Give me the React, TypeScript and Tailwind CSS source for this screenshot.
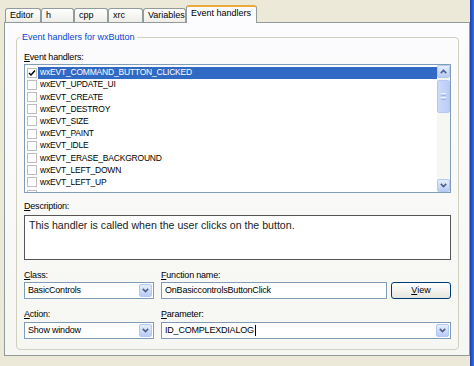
import React from "react";

const rows = [
  "wxEVT_COMMAND_BUTTON_CLICKED",
  "wxEVT_UPDATE_UI",
  "wxEVT_CREATE",
  "wxEVT_DESTROY",
  "wxEVT_SIZE",
  "wxEVT_PAINT",
  "wxEVT_IDLE",
  "wxEVT_ERASE_BACKGROUND",
  "wxEVT_LEFT_DOWN",
  "wxEVT_LEFT_UP",
  "",
];

const tabs = [
  { label: "Editor", cls: "w-[36px]" },
  { label: "h", cls: "w-[33px]" },
  { label: "cpp", cls: "w-[34px]" },
  { label: "xrc", cls: "w-[35px]" },
  { label: "Variables", cls: "w-[43px]" },
];

function ChevronDown() {
  return (
    <svg width="7" height="5" viewBox="0 0 7 5">
      <path d="M0.8 0.9 L3.5 3.6 L6.2 0.9" fill="none" stroke="#4D6185" strokeWidth="1.6" />
    </svg>
  );
}

function ChevronUp() {
  return (
    <svg width="7" height="5" viewBox="0 0 7 5">
      <path d="M0.8 4.1 L3.5 1.4 L6.2 4.1" fill="none" stroke="#4D6185" strokeWidth="1.6" />
    </svg>
  );
}

function XpButton({ children }: { children: React.ReactNode }) {
  return (
    <div className="w-[13px] h-[13px] rounded-[2px] border border-[#B4C8F4] bg-gradient-to-b from-[#E6EEFD] to-[#B8CBF6] flex items-center justify-center shrink-0">
      {children}
    </div>
  );
}

function Combo({ text, caret }: { text: string; caret?: boolean }) {
  return (
    <div className="h-[17px] border border-[#7F9DB9] bg-white flex items-center pr-[1px]">
      <div className="flex-1 flex items-center pl-[3px] text-[9px] tracking-[-0.2px] leading-[11px]">
        <span>{text}</span>
        {caret && <span className="w-[1px] h-[11px] bg-black ml-[1px]" />}
      </div>
      <XpButton>
        <ChevronDown />
      </XpButton>
    </div>
  );
}

function Label({ first, rest }: { first: string; rest: string }) {
  return (
    <div className="h-[11px] leading-[11px] text-[9px] tracking-[-0.2px]">
      <span className="underline underline-offset-[1px]">{first}</span>
      {rest}
    </div>
  );
}

function Scrollbar() {
  return (
    <div className="w-[13px] flex flex-col bg-[#F6F6F2] shrink-0">
      <XpButton>
        <ChevronUp />
      </XpButton>
      <div className="mt-[2px] h-[33px] rounded-[2px] border border-[#B4C8F4] bg-gradient-to-r from-[#CBDAFC] to-[#BACDF6] flex flex-col items-center justify-center gap-[1px]">
        <div className="w-[5px] h-[1px] bg-[#EEF4FE]" />
        <div className="w-[5px] h-[1px] bg-[#9CB6EE]" />
        <div className="w-[5px] h-[1px] bg-[#EEF4FE]" />
        <div className="w-[5px] h-[1px] bg-[#9CB6EE]" />
      </div>
      <div className="flex-1" />
      <XpButton>
        <ChevronDown />
      </XpButton>
    </div>
  );
}

export default function App() {
  return (
    <div className="w-[474px] h-[366px] flex bg-[#ECE9D8] overflow-hidden font-['Liberation_Sans',Arial,sans-serif] text-black">
      <div className="w-[470px] flex flex-col pl-[4px] pt-[5px]">
        <div className="h-[18px] flex items-end pl-[1px]">
          {tabs.map((t) => (
            <div
              key={t.label}
              className={`${t.cls} h-[15px] border border-b-0 border-[#919B9C] rounded-t-[3px] bg-gradient-to-b from-white to-[#ECEBE5] pl-[4px] text-[9px] leading-[13px]`}
            >
              {t.label}
            </div>
          ))}
          <div className="relative z-10 w-[71px] h-[18px] border-x border-[#919B9C] border-t-2 border-t-[#EDA93C] rounded-t-[3px] bg-[#FCFCFE] pl-[4px] text-[9px] leading-[13px]">
            Event handlers
          </div>
        </div>
        <div className="-mt-[1px] w-[466px] h-[334px] border border-[#919B9C] bg-gradient-to-b from-[#FCFCFE] to-[#F6F6F2] pt-[9px]">
          <fieldset className="ml-[11px] w-[443px] border border-[#D0D0BF] rounded-[4px] px-[3px] pb-[10px]">
            <legend className="px-[2px] text-[9px] leading-[11px] text-[#0046D5]">Event handlers for wxButton</legend>
            <div className="px-[4px] pt-[9px] flex flex-col">
              <Label first="E" rest="vent handlers:" />
              <div className="mt-[1px] h-[129px] border border-[#7F9DB9] bg-white flex overflow-hidden">
                <div className="flex-1 pt-[1.6px] overflow-hidden">
                  {rows.map((r, i) => (
                    <div key={i} className="h-[12.2px] flex items-center">
                      <div className="w-[10px] h-[10px] ml-[2px] mr-[1px] border border-[#BDBDBD] bg-white flex items-center justify-center shrink-0">
                        {i === 0 && (
                          <svg width="8" height="8" viewBox="0 0 8 8">
                            <path d="M1 4 L3 6 L7 1.5" fill="none" stroke="#000" strokeWidth="1.5" />
                          </svg>
                        )}
                      </div>
                      <div
                        className={`flex-1 h-full flex items-center pl-[2px] text-[8.5px] tracking-[-0.2px] leading-[11px] ${
                          i === 0 ? "bg-[#316AC5] text-white" : "text-black"
                        }`}
                      >
                        {r}
                      </div>
                    </div>
                  ))}
                </div>
                <Scrollbar />
              </div>
              <div className="mt-[8px]">
                <Label first="D" rest="escription:" />
              </div>
              <div className="mt-[3px] h-[45px] border border-[#555555] bg-white px-[4px] pt-[3px] text-[10.6px] leading-[13px] text-[#222]">
                This handler is called when the user clicks on the button.
              </div>
              <div className="mt-[10px] flex gap-[7px]">
                <div className="w-[130px] flex flex-col">
                  <Label first="C" rest="lass:" />
                  <div className="mt-[1px]">
                    <Combo text="BasicControls" />
                  </div>
                </div>
                <div className="flex-1 flex flex-col">
                  <Label first="F" rest="unction name:" />
                  <div className="mt-[1px] flex gap-[4px]">
                    <div className="w-[226px] h-[17px] border border-[#7F9DB9] bg-white pl-[3px] flex items-center text-[9px] tracking-[-0.2px] leading-[11px]">
                      OnBasiccontrolsButtonClick
                    </div>
                    <div className="flex-1 h-[17px] rounded-[3px] border border-[#003C74] bg-gradient-to-b from-white to-[#E6E5DE] flex items-center justify-center text-[9px] leading-[11px]">
                      <span className="underline underline-offset-[1px]">V</span>iew
                    </div>
                  </div>
                </div>
              </div>
              <div className="mt-[10px] flex gap-[7px]">
                <div className="w-[130px] flex flex-col">
                  <Label first="A" rest="ction:" />
                  <div className="mt-[2px]">
                    <Combo text="Show window" />
                  </div>
                </div>
                <div className="flex-1 flex flex-col">
                  <Label first="P" rest="arameter:" />
                  <div className="mt-[2px]">
                    <Combo text="ID_COMPLEXDIALOG" caret />
                  </div>
                </div>
              </div>
            </div>
          </fieldset>
        </div>
      </div>
      <div className="w-[4px] bg-gradient-to-r from-[#1A3FA8] to-[#3C6EE6]" />
    </div>
  );
}
